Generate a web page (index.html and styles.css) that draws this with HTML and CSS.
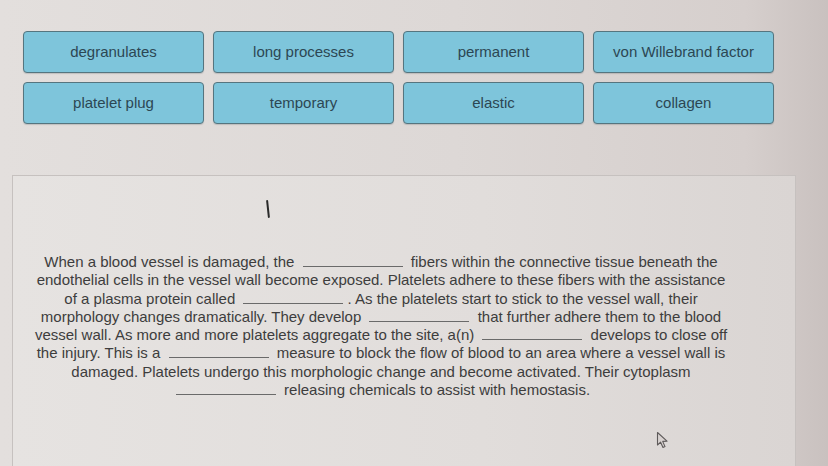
FILE: index.html
```html
<!DOCTYPE html>
<html lang="en">
<head>
<meta charset="utf-8">
<title>Hemostasis – drag the terms</title>
<link rel="stylesheet" href="styles.css">
</head>
<body>
<main class="screen">
  <section class="bank">
    <div class="tile">degranulates</div>
    <div class="tile">long processes</div>
    <div class="tile">permanent</div>
    <div class="tile">von Willebrand factor</div>
    <div class="tile">platelet plug</div>
    <div class="tile">temporary</div>
    <div class="tile">elastic</div>
    <div class="tile">collagen</div>
  </section>

  <section class="panel">
    <span class="caret" aria-hidden="true"></span>
    <div class="passage">
      <p class="line">When a blood vessel is damaged, the <span class="blank"></span> fibers within the connective tissue beneath the</p>
      <p class="line">endothelial cells in the vessel wall become exposed. Platelets adhere to these fibers with the assistance</p>
      <p class="line">of a plasma protein called <span class="blank"></span>. As the platelets start to stick to the vessel wall, their</p>
      <p class="line">morphology changes dramatically. They develop <span class="blank"></span> that further adhere them to the blood</p>
      <p class="line">vessel wall. As more and more platelets aggregate to the site, a(n) <span class="blank"></span> develops to close off</p>
      <p class="line">the injury. This is a <span class="blank"></span> measure to block the flow of blood to an area where a vessel wall is</p>
      <p class="line">damaged. Platelets undergo this morphologic change and become activated. Their cytoplasm</p>
      <p class="line"><span class="blank"></span> releasing chemicals to assist with hemostasis.</p>
    </div>
    <svg class="pointer" width="14" height="18" viewBox="0 0 14 18" aria-hidden="true">
      <path d="M1.5 1.5 L1.5 14 L4.6 11.2 L7 16.5 L9 15.6 L6.7 10.4 L11 10.2 Z" fill="#d8d2d0" stroke="#5e5a5a" stroke-width="1.1" stroke-linejoin="round"/>
    </svg>
  </section>
</main>
</body>
</html>
```

FILE: styles.css
```css
html, body {
  margin: 0;
  padding: 0;
}

body {
  width: 828px;
  height: 466px;
  overflow: hidden;
  font-family: "Liberation Sans", Arial, sans-serif;
  background: linear-gradient(90deg, #e3dfdd 0%, #ddd8d6 55%, #d6cfcd 90%, #c9c1bf 100%);
}

.screen {
  position: relative;
  height: 466px;
}

/* word bank */
.bank {
  display: grid;
  grid-template-columns: repeat(4, 181px);
  grid-auto-rows: 42px;
  column-gap: 9px;
  row-gap: 9px;
  padding: 31px 0 0 23px;
}

.tile {
  display: flex;
  align-items: center;
  justify-content: center;
  padding-bottom: 2px;
  background: #7ec5db;
  border: 1px solid #55757f;
  border-radius: 4px;
  color: #2c4753;
  font-size: 15px;
  box-shadow: 0 1px 1px rgba(60, 70, 75, 0.2);
}

/* sentence panel */
.panel {
  position: relative;
  margin: 51px 0 0 12px;
  width: 782px;
  height: 300px;
  border: 1px solid #c6c1bf;
  border-bottom: none;
  background: linear-gradient(90deg, #e6e3e1 0%, #e1dddb 60%, #dad5d3 100%);
}

.caret {
  position: absolute;
  left: 254px;
  top: 24px;
  width: 2px;
  height: 18px;
  background: #2a2a2a;
  border-radius: 1px;
  transform: rotate(-6deg);
}

.passage {
  width: 740px;
  margin: 77px 0 0 -2px;
  text-align: center;
  color: #3d3d3d;
  font-size: 15px;
  line-height: 18.3px;
}

.line {
  margin: 0;
  white-space: nowrap;
}

.blank {
  display: inline-block;
  width: 100px;
  height: 11px;
  margin: 0 4px;
  border-bottom: 1px solid #6a6a6a;
  vertical-align: baseline;
}

.pointer {
  position: absolute;
  left: 643px;
  top: 255px;
}
```
